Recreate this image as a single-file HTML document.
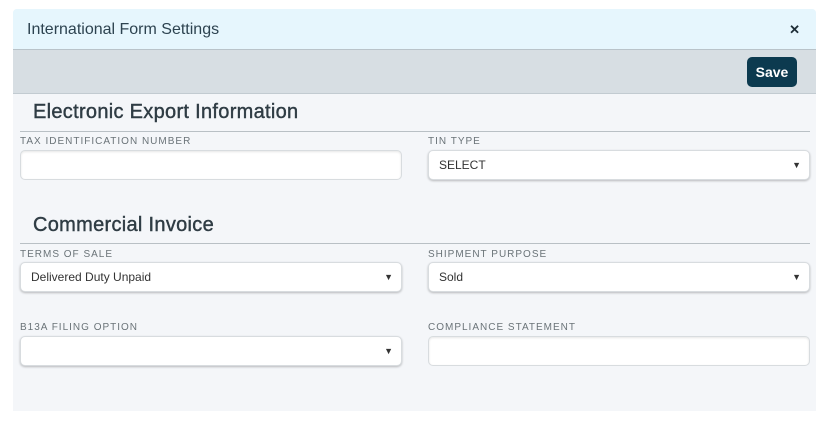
<!DOCTYPE html>
<html><head><style>
*{box-sizing:border-box;margin:0;padding:0}
body{width:833px;height:427px;background:#fff;font-family:"Liberation Sans",sans-serif;position:relative;overflow:hidden}
.panel{position:absolute;left:13px;top:9px;width:803px;height:402px;background:#f4f6f9;border-radius:4px 4px 0 0;overflow:hidden}
.hdr{position:absolute;left:0;top:0;width:803px;height:41px;background:#e6f6fd;border-bottom:1px solid #b9c3c9}
.hdr .t{position:absolute;left:14px;top:12px;font-size:16px;color:#2d4350}
.hdr .x{position:absolute;right:16px;top:13px;font-size:13px;color:#1d2d36;font-weight:bold}
.tb{position:absolute;left:0;top:41px;width:803px;height:44px;background:#d7dee3;border-bottom:1px solid #c2cbd1}
.save{position:absolute;left:734px;top:7px;width:50px;height:30px;background:#0c3a4f;border-radius:5px;color:#fff;font-weight:bold;font-size:14px;text-align:center;line-height:30px}
h2{position:absolute;font-size:20px;font-weight:normal;color:#2f3c44;letter-spacing:.3px;-webkit-text-stroke:.4px #2f3c44}
.line{position:absolute;left:7px;width:790px;height:1px;background:#b9c0c5}
.lab{position:absolute;font-size:10px;color:#6a7378;letter-spacing:1px}
.in{position:absolute;width:382px;height:30px;background:#fff;border:1px solid #d8dcdf;border-radius:5px;box-shadow:0 1px 2px rgba(0,0,0,.25);font-size:12px;color:#333;padding-left:10px;line-height:28px}
.sel:after{content:"▼";position:absolute;right:8px;top:0;font-size:9px;color:#333}
</style></head><body>
<div class="panel">
<div class="hdr"><div class="t">International Form Settings</div><div class="x">✕</div></div>
<div class="tb"><div class="save">Save</div></div>
<h2 style="left:20px;top:92px">Electronic Export Information</h2>
<div class="line" style="top:122px"></div>
<div class="lab" style="left:7px;top:127px">TAX IDENTIFICATION NUMBER</div>
<div class="lab" style="left:415px;top:127px">TIN TYPE</div>
<div class="in" style="left:7px;top:141px;box-shadow:inset 0 1px 2px rgba(0,0,0,.1)"></div>
<div class="in sel" style="left:415px;top:141px">SELECT</div>
<h2 style="left:20px;top:205px">Commercial Invoice</h2>
<div class="line" style="top:234px"></div>
<div class="lab" style="left:7px;top:240px">TERMS OF SALE</div>
<div class="lab" style="left:415px;top:240px">SHIPMENT PURPOSE</div>
<div class="in sel" style="left:7px;top:253px">Delivered Duty Unpaid</div>
<div class="in sel" style="left:415px;top:253px">Sold</div>
<div class="lab" style="left:7px;top:313px">B13A FILING OPTION</div>
<div class="lab" style="left:415px;top:313px">COMPLIANCE STATEMENT</div>
<div class="in sel" style="left:7px;top:327px"></div>
<div class="in" style="left:415px;top:327px;box-shadow:inset 0 1px 2px rgba(0,0,0,.1)"></div>
</div>
</body></html>
